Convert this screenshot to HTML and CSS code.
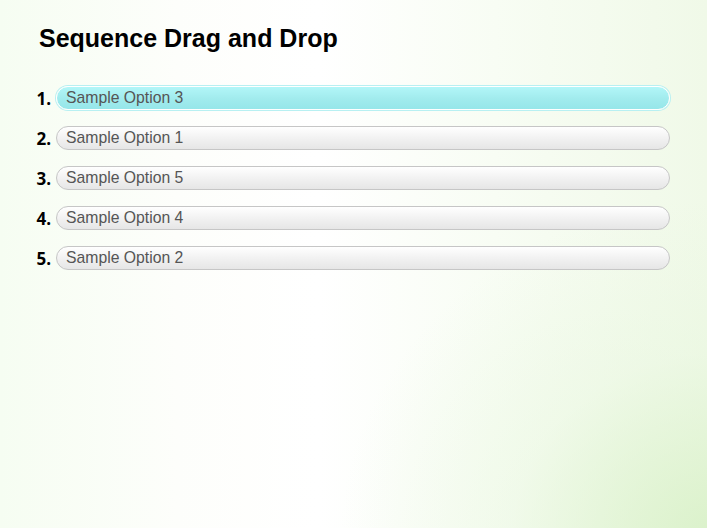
FILE: index.html
```html
<!DOCTYPE html>
<html lang="en">
<head>
    <meta charset="UTF-8">
    <title>Sequence Drag and Drop</title>
    <link rel="stylesheet" href="styles.css">
</head>
<body>
    <div class="page">
        <h1>Sequence Drag and Drop</h1>
        <ol class="sequence">
            <li><div class="option active">Sample Option 3</div></li>
            <li><div class="option">Sample Option 1</div></li>
            <li><div class="option">Sample Option 5</div></li>
            <li><div class="option">Sample Option 4</div></li>
            <li><div class="option">Sample Option 2</div></li>
        </ol>
    </div>
</body>
</html>
```
FILE: styles.css
```css
html, body {
    height: 100%;
}
body {
    margin: 0;
    font-family: "Liberation Sans", Arial, sans-serif;
    color: #000;
    background-color: #fbfef8;
    background-image:
        radial-gradient(ellipse 380px 340px at 720px 540px, rgba(214, 240, 196, 0.85), rgba(230, 246, 220, 0.4) 55%, rgba(255, 255, 255, 0) 100%),
        linear-gradient(90deg, #f6fdf2 0%, #fdfefb 25%, #ffffff 45%, #f8fdf4 70%, #f0f9e8 100%);
}
.page {
    padding: 24px 37px 0 33px;
}
h1 {
    margin: 0 0 34px 6px;
    font-size: 25px;
    font-weight: bold;
    line-height: 28px;
}
.sequence {
    margin: 0;
    padding: 0;
    list-style: none;
    counter-reset: seq;
    display: flex;
    flex-direction: column;
    gap: 16px;
}
.sequence li {
    counter-increment: seq;
    display: flex;
    align-items: center;
}
.sequence li::before {
    content: counter(seq) ".";
    width: 18px;
    margin-right: 5px;
    text-align: right;
    font-family: "Open Sans", sans-serif;
    font-weight: bold;
    font-size: 17px;
}
.option {
    flex: 1;
    height: 22px;
    line-height: 22px;
    padding-left: 9px;
    border: 1px solid #c6c6c6;
    border-radius: 12px;
    background: linear-gradient(#ffffff, #f3f3f3 45%, #e6e6e6);
    color: #555;
    font-size: 15.75px;
}
.option.active {
    border-color: #ffffff;
    background: linear-gradient(#b2f6f8, #a2ecee 50%, #96e6e9);
    box-shadow: 0 0 0 1px #b8f0f2;
}
```
